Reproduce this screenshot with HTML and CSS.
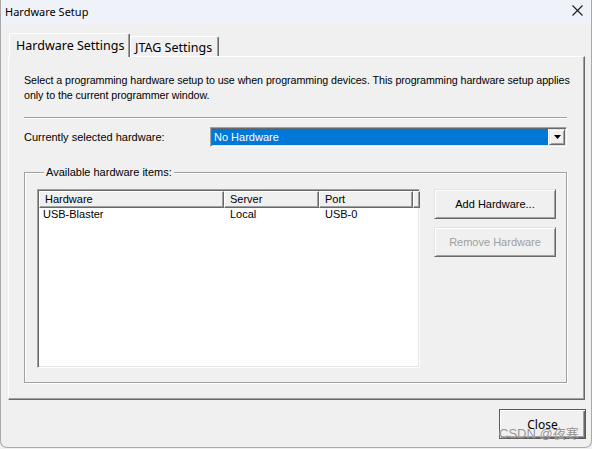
FILE: index.html
```html
<!DOCTYPE html>
<html>
<head>
<meta charset="utf-8">
<link rel="stylesheet" href="styles.css">
</head>
<body>
<div class="window">
  <div class="titlebar">
    <span class="title">Hardware Setup</span>
    <svg class="close-x" width="11" height="11" viewBox="0 0 11 11"><path d="M0.5 0.5 L10.5 10.5 M10.5 0.5 L0.5 10.5" stroke="#1a1a1a" stroke-width="1.1" fill="none"/></svg>
  </div>
  <div class="tabs">
    <div class="tab active">Hardware Settings</div>
    <div class="tab">JTAG Settings</div>
  </div>
  <div class="panel">
    <p class="desc">Select a programming hardware setup to use when programming devices. This programming hardware setup applies<br>only to the current programmer window.</p>
    <div class="sep"></div>
    <div class="combo-row">
      <span class="label">Currently selected hardware:</span>
      <div class="combo">
        <div class="combo-value">No Hardware</div>
        <div class="combo-btn"><svg width="7" height="4" viewBox="0 0 7 4"><path d="M0 0 H7 L3.5 4 Z" fill="#000"/></svg></div>
      </div>
    </div>
    <fieldset class="group">
      <legend>Available hardware items:</legend>
      <div class="group-body">
        <div class="list">
          <div class="list-head">
            <div class="hcell">Hardware</div>
            <div class="hcell">Server</div>
            <div class="hcell">Port</div>
            <div class="hcell"></div>
          </div>
          <div class="list-row">
            <div class="cell first">USB-Blaster</div>
            <div class="cell">Local</div>
            <div class="cell">USB-0</div>
            <div class="cell"></div>
          </div>
        </div>
        <div class="buttons">
          <button class="btn">Add Hardware...</button>
          <button class="btn disabled">Remove Hardware</button>
        </div>
      </div>
    </fieldset>
  </div>
  <div class="footer">
    <button class="btn default">Close</button>
    <span class="watermark">CSDN @夜寒</span>
  </div>
</div>
</body>
</html>
```
FILE: styles.css
```css
html, body {
  margin: 0;
  padding: 0;
  background: #f0f0f0;
}
body {
  width: 592px;
  height: 449px;
  overflow: hidden;
  font-family: "Liberation Sans", Arial, sans-serif;
  font-size: 11px;
  color: #000;
}
.window {
  width: 592px;
  height: 448px;
  box-sizing: border-box;
  border-left: 1px solid #a9a9a9;
  border-right: 1px solid #a9a9a9;
  border-bottom: 1px solid #a9a9a9;
  border-radius: 0 0 7px 7px;
  background: #f0f0f0;
}
.titlebar {
  height: 24px;
  background: #eff3f9;
  display: flex;
  align-items: center;
  justify-content: space-between;
  padding: 0 8px 0 4px;
  box-sizing: border-box;
}
.title {
  font-family: "Noto Sans", "Open Sans", sans-serif;
  font-size: 11px;
  color: #000;
  position: relative;
  top: -1px;
}
.close-x {
  display: block;
  margin-top: -3px;
}
.tabs {
  margin-top: 9px;
  padding-left: 8px;
  height: 23px;
  display: flex;
  align-items: flex-end;
}
.tab {
  box-sizing: border-box;
  background: #f0f0f0;
  font-family: "Noto Sans", "Open Sans", sans-serif;
  font-size: 12.5px;
  display: flex;
  align-items: center;
  white-space: nowrap;
  border-top: 1px solid #fff;
  border-left: 1px solid #fff;
  border-right: 1px solid #696969;
  box-shadow: inset -1px 0 0 #a0a0a0;
  border-radius: 2px 2px 0 0;
}
.tab.active {
  width: 121px;
  height: 24px;
  margin-bottom: -1px;
  padding-left: 6px;
  position: relative;
  z-index: 1;
}
.tab:not(.active) {
  width: 89px;
  height: 20px;
  padding-left: 4px;
  padding-top: 1px;
}
.panel {
  margin-left: 7px;
  width: 577px;
  height: 344px;
  box-sizing: border-box;
  border-top: 1px solid #fff;
  border-left: 1px solid #fff;
  border-right: 1px solid #696969;
  border-bottom: 1px solid #696969;
  box-shadow: inset -1px -1px 0 #a0a0a0;
  padding: 16px 0 0 15px;
}
.desc {
  margin: 0;
  font-size: 10.7px;
  letter-spacing: -0.06px;
  line-height: 15px;
  white-space: nowrap;
}
.sep {
  width: 543px;
  margin-top: 14px;
  border-top: 1px solid #a0a0a0;
  border-bottom: 1px solid #fff;
}
.combo-row {
  margin-top: 8px;
  width: 543px;
  height: 20px;
  display: flex;
  align-items: center;
}
.combo {
  margin-left: auto;
  width: 357px;
  height: 20px;
  box-sizing: border-box;
  border: 1px solid;
  border-color: #a0a0a0 #fff #fff #a0a0a0;
  box-shadow: inset 1px 1px 0 #696969, inset -1px -1px 0 #e3e3e3;
  padding: 1px;
  display: flex;
  background: #fff;
}
.combo-value {
  flex: 1;
  background: #0078d7;
  color: #fff;
  padding-left: 2px;
  line-height: 16px;
}
.combo-btn {
  width: 16px;
  height: 16px;
  margin-left: 1px;
  box-sizing: border-box;
  background: #f0f0f0;
  border: 1px solid;
  border-color: #e3e3e3 #696969 #696969 #e3e3e3;
  box-shadow: inset 1px 1px 0 #fff, inset -1px -1px 0 #a0a0a0;
  display: flex;
  align-items: center;
  justify-content: center;
}
.combo-btn svg {
  display: block;
}
.group {
  margin: 18px 0 0 0;
  width: 543px;
  height: 218px;
  box-sizing: border-box;
  padding: 10px 0 0 12px;
  border: 1px solid #a0a0a0;
  box-shadow: 1px 1px 0 #fff, inset 1px 1px 0 #fff;
  min-inline-size: 0;
}
.group legend {
  margin-left: 7px;
  padding: 0 2px;
  line-height: 14px;
  background: #f0f0f0;
  font-size: 11px;
}
.group-body {
  display: flex;
  gap: 14px;
}
.list {
  width: 383px;
  height: 179px;
  box-sizing: border-box;
  border: 1px solid;
  border-color: #a0a0a0 #fff #fff #a0a0a0;
  box-shadow: inset 1px 1px 0 #696969, inset -1px -1px 0 #e3e3e3;
  padding: 1px;
  background: #fff;
}
.list-head, .list-row {
  display: grid;
  grid-template-columns: 185px 95px 94px 1fr;
}
.hcell {
  height: 17px;
  box-sizing: border-box;
  background: #f0f0f0;
  border-top: 1px solid #fff;
  border-left: 1px solid #fff;
  border-right: 1px solid #696969;
  border-bottom: 1px solid #696969;
  box-shadow: inset -1px -1px 0 #a0a0a0;
  padding-left: 5px;
  line-height: 15px;
  white-space: nowrap;
}
.cell {
  line-height: 13px;
  padding-left: 6px;
  white-space: nowrap;
}
.cell.first {
  padding-left: 4px;
}
.buttons {
  display: flex;
  flex-direction: column;
  gap: 8px;
}
.btn {
  width: 122px;
  height: 30px;
  box-sizing: border-box;
  margin: 0;
  padding: 0;
  background: #f0f0f0;
  border: 1px solid;
  border-color: #e3e3e3 #696969 #696969 #e3e3e3;
  box-shadow: inset 1px 1px 0 #fff, inset -1px -1px 0 #a0a0a0;
  font-family: "Liberation Sans", Arial, sans-serif;
  font-size: 11px;
  color: #000;
  border-radius: 0;
}
.btn.disabled {
  color: #a0a0a0;
}
.footer {
  margin-top: 9px;
  display: flex;
  justify-content: flex-end;
  padding-right: 5px;
  position: relative;
}
.btn.default {
  width: 87px;
  height: 30px;
  border: 1px solid #5a5a5a;
  box-shadow: inset 1px 1px 0 #fff, inset -1px -1px 0 #696969, inset -2px -2px 0 #a0a0a0;
  font-family: "Noto Sans", "Open Sans", sans-serif;
  font-size: 12px;
}
.watermark {
  position: absolute;
  left: 498px;
  top: 17px;
  font-family: "Liberation Sans", "Noto Sans CJK SC", sans-serif;
  font-size: 13px;
  line-height: 16px;
  color: rgba(110, 110, 110, 0.75);
  text-shadow: 0 0 1px #fff;
  white-space: nowrap;
  pointer-events: none;
}
```
